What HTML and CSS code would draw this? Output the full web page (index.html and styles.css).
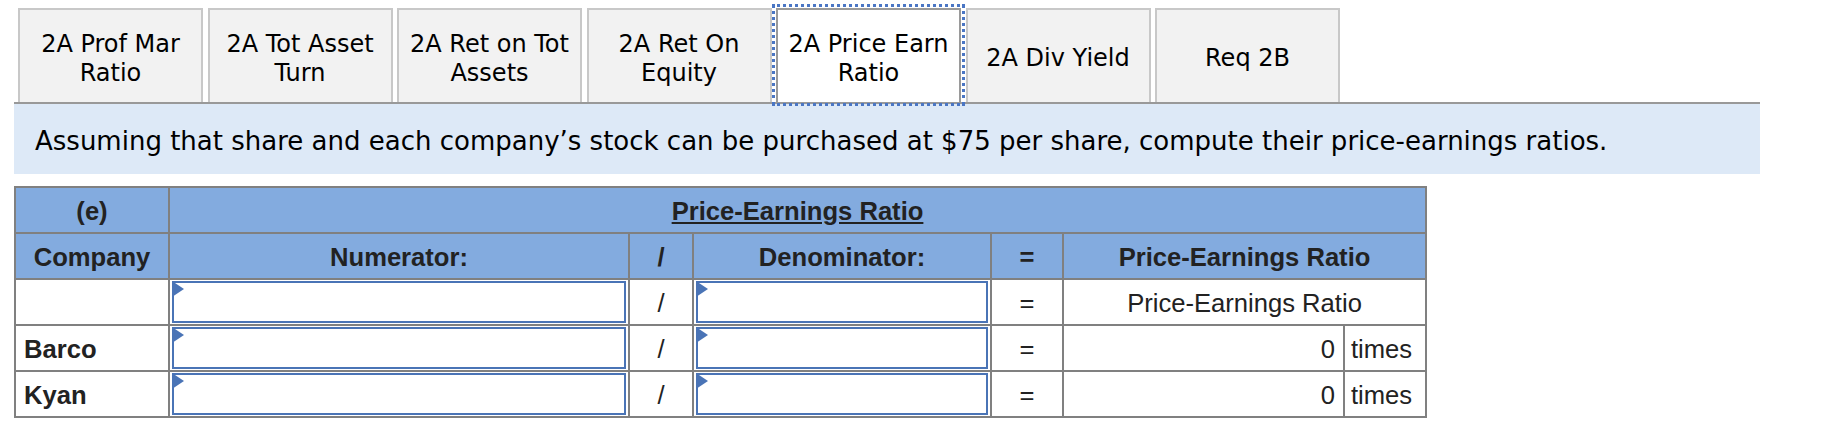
FILE: index.html
```html
<!DOCTYPE html>
<html lang="en">
<head>
    <meta charset="UTF-8">
    <title>Price-Earnings Ratio</title>
    <link rel="stylesheet" href="styles.css">
</head>
<body>
    <!-- Abas das questões -->
    <div class="tabs">
        <div class="tab">2A Prof Mar<br>Ratio</div>
        <div class="tab">2A Tot Asset<br>Turn</div>
        <div class="tab">2A Ret on Tot<br>Assets</div>
        <div class="tab">2A Ret On<br>Equity</div>
        <div class="tab active">2A Price Earn<br>Ratio</div>
        <div class="tab">2A Div Yield</div>
        <div class="tab">Req 2B</div>
    </div>

    <div class="instructions">
        Assuming that share and each company’s stock can be purchased at $75 per share, compute their price-earnings ratios.
    </div>

    <table class="ratio-table">
        <colgroup>
            <col class="c-company">
            <col class="c-num">
            <col class="c-op">
            <col class="c-den">
            <col class="c-eq">
            <col class="c-value">
            <col class="c-unit">
        </colgroup>
        <tr class="head">
            <th>(e)</th>
            <th colspan="6"><u>Price-Earnings Ratio</u></th>
        </tr>
        <tr class="head">
            <th>Company</th>
            <th>Numerator:</th>
            <th>/</th>
            <th>Denominator:</th>
            <th>=</th>
            <th colspan="2">Price-Earnings Ratio</th>
        </tr>
        <tr>
            <td></td>
            <td class="field-cell"><div class="field"><input type="text"></div></td>
            <td class="op">/</td>
            <td class="field-cell"><div class="field"><input type="text"></div></td>
            <td class="op">=</td>
            <td colspan="2" class="op">Price-Earnings Ratio</td>
        </tr>
        <tr>
            <td class="company">Barco</td>
            <td class="field-cell"><div class="field"><input type="text"></div></td>
            <td class="op">/</td>
            <td class="field-cell"><div class="field"><input type="text"></div></td>
            <td class="op">=</td>
            <td class="value">0</td>
            <td class="unit">times</td>
        </tr>
        <tr>
            <td class="company">Kyan</td>
            <td class="field-cell"><div class="field"><input type="text"></div></td>
            <td class="op">/</td>
            <td class="field-cell"><div class="field"><input type="text"></div></td>
            <td class="op">=</td>
            <td class="value">0</td>
            <td class="unit">times</td>
        </tr>
    </table>
</body>
</html>
```

FILE: styles.css
```css
body, html {
    margin: 0;
    background-color: #fff;
    font-family: "DejaVu Sans", Verdana, sans-serif;
    color: #000;
}

.tabs {
    display: flex;
    gap: 4.5px;
    padding: 8px 0 0 18px;
}

.tab {
    width: 185px;
    height: 94px;
    box-sizing: border-box;
    display: flex;
    align-items: center;
    justify-content: center;
    text-align: center;
    padding-top: 5px;
    font-size: 24px;
    line-height: 29px;
    background-color: #f2f2f2;
    border: 2px solid #c8c8c8;
    border-bottom: none;
}

.tab.active {
    background-color: #fff;
    border-color: #9a9a9a;
    outline: 3px dotted #4a76c4;
    outline-offset: 1px;
}

.instructions {
    margin-left: 14px;
    width: 1746px;
    height: 72px;
    box-sizing: border-box;
    display: flex;
    align-items: center;
    padding: 3px 0 0 21px;
    background-color: #dde9f7;
    border-top: 2px solid #999;
    font-size: 26px;
}

.ratio-table {
    margin: 12px 0 0 14px;
    border-collapse: collapse;
    table-layout: fixed;
    width: 1411px;
    font-family: "Liberation Sans", Arial, sans-serif;
    font-size: 25.6px;
    color: #222;
}

.c-company { width: 154px; }
.c-num { width: 460px; }
.c-op { width: 64px; }
.c-den { width: 298px; }
.c-eq { width: 72px; }
.c-value { width: 281px; }
.c-unit { width: 82px; }

.ratio-table th,
.ratio-table td {
    border: 2px solid #808080;
    height: 46px;
    padding: 2px 8px 0;
    box-sizing: border-box;
}

.ratio-table th {
    background-color: #83abdf;
    font-weight: bold;
    text-align: center;
}

.ratio-table .op {
    text-align: center;
}

.ratio-table .company {
    font-weight: bold;
    text-align: left;
}

.ratio-table .value {
    text-align: right;
}

.ratio-table .unit {
    text-align: left;
    padding-left: 6px;
}

.ratio-table .field-cell {
    padding: 1px 2px;
}

.field {
    position: relative;
}

.field input {
    display: block;
    width: 100%;
    height: 42px;
    box-sizing: border-box;
    border: 2px solid #4a74b6;
    background-color: #fff;
    font-size: 20px;
}

/* marcador azul no canto do campo */
.field::before {
    content: "";
    position: absolute;
    z-index: 1;
    left: 0;
    top: 0;
    border-top: 8px solid transparent;
    border-bottom: 8px solid transparent;
    border-left: 12px solid #4a74b6;
}
```
